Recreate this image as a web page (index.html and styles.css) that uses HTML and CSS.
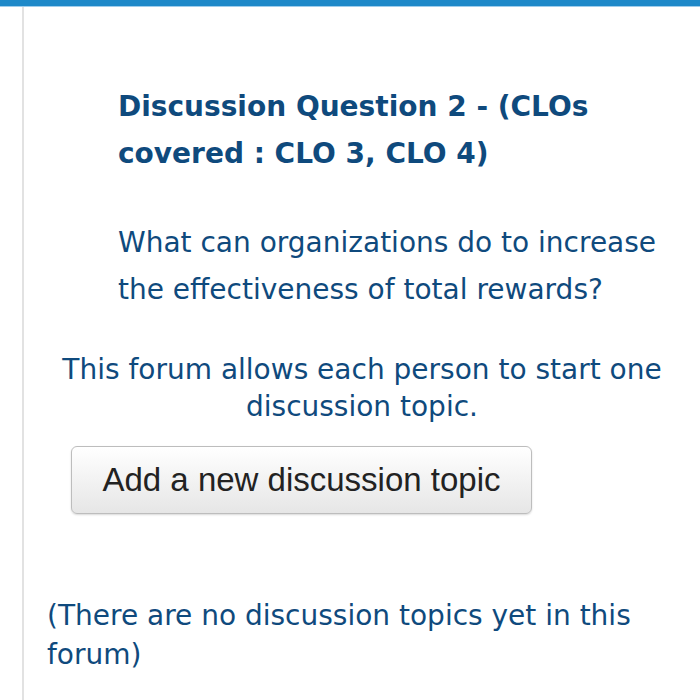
FILE: index.html
```html
<!DOCTYPE html>
<html lang="en">
<head>
    <meta charset="UTF-8">
    <meta name="viewport" content="width=device-width, initial-scale=1.0">
    <title>Discussion Question 2</title>
    <link rel="stylesheet" href="styles.css">
</head>
<body>

    <div class="top-bar"></div>

    <div class="page">
        <div class="intro">
            <h2>Discussion Question 2 - (CLOs covered : CLO 3, CLO 4)</h2>
            <p>What can organizations do to increase the effectiveness of total rewards?</p>
        </div>

        <p class="forum-note">This forum allows each person to start one discussion topic.</p>

        <div class="new-topic">
            <button>Add a new discussion topic</button>
        </div>

        <p class="no-topics">(There are no discussion topics yet in this forum)</p>
    </div>

</body>
</html>
```

FILE: styles.css
```css
body {
    margin: 0;
    padding: 0;
    font-family: "DejaVu Sans", Verdana, sans-serif;
    color: #0f4a7d;
    background: #fff;
    overflow: hidden;
}

.top-bar {
    height: 6px;
    background: #1e89c9;
    border-bottom: 1px solid #9fcdec;
}

.page {
    margin-left: 22px;
    padding: 0 23px 0 23px;
    border-left: 2px solid #e2e2e2;
    min-height: 693px;
}

.intro {
    padding: 76px 0 0 71px;
}

.intro h2 {
    margin: 0;
    font-size: 28px;
    font-weight: bold;
    line-height: 47px;
}

.intro p {
    margin: 42px 0 0;
    font-size: 28px;
    line-height: 47px;
}

.forum-note {
    margin: 38px 0 0;
    text-align: center;
    font-size: 28px;
    line-height: 37px;
}

.new-topic {
    margin-top: 21px;
    padding-left: 24px;
}

.new-topic button {
    width: 461px;
    height: 68px;
    font-family: "Liberation Sans", Arial, sans-serif;
    font-size: 33px;
    color: #222;
    background: linear-gradient(#ffffff, #e6e6e6);
    border: 1px solid #bdbdbd;
    border-radius: 6px;
    box-shadow: 0 1px 2px rgba(0, 0, 0, 0.15);
}

.no-topics {
    margin: 82px 0 0;
    font-size: 28px;
    line-height: 39px;
}
```
